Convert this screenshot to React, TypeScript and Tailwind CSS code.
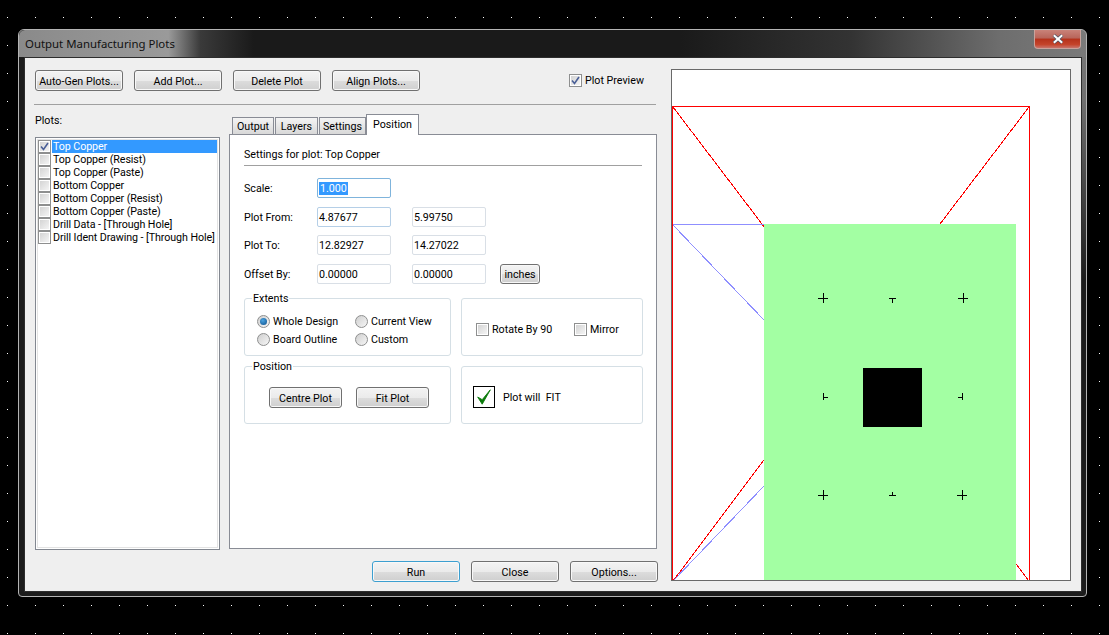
const plots = [
  "Top Copper",
  "Top Copper (Resist)",
  "Top Copper (Paste)",
  "Bottom Copper",
  "Bottom Copper (Resist)",
  "Bottom Copper (Paste)",
  "Drill Data - [Through Hole]",
  "Drill Ident Drawing - [Through Hole]",
];

const btn =
  "flex items-center justify-center whitespace-nowrap rounded-[3px] border bg-[linear-gradient(#f3f3f3,#ebebeb_50%,#dddddd_50%,#cfcfcf)] shadow-[inset_0_0_0_1px_#f8f8f8] pt-px text-black";

function Check({ checked }: { checked?: boolean }) {
  return (
    <span className="flex h-[13px] w-[13px] shrink-0 items-center justify-center border border-[#8e8f8f] bg-white p-px">
      <span className="relative block h-full w-full bg-[linear-gradient(135deg,#d4d4d4,#f4f4f4)]">
        {checked && (
          <svg viewBox="0 0 9 9" className="absolute inset-0 h-[9px] w-[9px]">
            <path d="M1 4.5 L3.5 7.5 L8 1" fill="none" stroke="#4a5f97" strokeWidth="1.6" />
          </svg>
        )}
      </span>
    </span>
  );
}

function Radio({ on, label }: { on?: boolean; label: string }) {
  return (
    <div className="flex items-center gap-[3px]">
      <span className="flex h-[13px] w-[13px] items-center justify-center rounded-full border border-[#8e8f8f] bg-[linear-gradient(135deg,#cfcfcf,#f6f6f6)]">
        {on && <span className="h-[7px] w-[7px] rounded-full bg-[radial-gradient(circle_at_40%_35%,#4aa3e0,#0b4f8c)]" />}
      </span>
      <span>{label}</span>
    </div>
  );
}

function Field({ value, selected, tint }: { value: string; selected?: boolean; tint?: string }) {
  return (
    <div className={`flex h-[20px] w-[74px] items-center rounded-[2px] border pl-px ${tint ?? "border-[#d9dfe6]"}`}>
      {selected ? <span className="bg-[#3399ff] px-px text-white">{value}</span> : <span>{value}</span>}
    </div>
  );
}

function Group({ title, children }: { title?: string; children: React.ReactNode }) {
  return (
    <div className="relative h-[58px] rounded-[3px] border border-[#d5dfe5]">
      {title && <span className="absolute -top-[7px] left-[7px] bg-white px-px leading-[13px]">{title}</span>}
      {children}
    </div>
  );
}

function Cross({ x, y }: { x: number; y: number }) {
  return <path d={`M${x - 5} ${y}H${x + 5}M${x} ${y - 5}V${y + 5}`} stroke="#000" fill="none" />;
}

function Preview() {
  return (
    <div className="h-[512px] w-[400px] shrink-0 border border-[#696969] bg-white">
      <svg viewBox="672 70 398 510" className="block h-[510px] w-[398px]" shapeRendering="crispEdges">
        <path d="M672.5 581V106.5H1029.5V581" fill="none" stroke="#ff0000" />
        <path d="M673 107L765 228M1029 107L940 224M673 581L764 460M1016 564L1029 581" fill="none" stroke="#ff0000" />
        <path d="M673 224.5H764M673 225L764 320M673 581L764 486" fill="none" stroke="#8f8fff" />
        <rect x="764" y="224" width="252" height="357" fill="#a3ffa3" />
        <rect x="863" y="368" width="59" height="59" fill="#000" />
        <Cross x={823} y={298} />
        <Cross x={963} y={298} />
        <Cross x={823} y={495} />
        <Cross x={962} y={495} />
        <path
          d="M888.5 298H895.5M892 297.5V302.5M823 392.5V399.5M822.5 397H827.5M962 392.5V399.5M957.5 397H962.5M888.5 495H895.5M892 491.5V495.5"
          stroke="#000"
          fill="none"
        />
      </svg>
    </div>
  );
}

function CloseGlyph() {
  return (
    <svg viewBox="0 0 14 12" className="h-[10px] w-[12px]">
      <path d="M2 1.5L12 10.5M12 1.5L2 10.5" stroke="#4a5568" strokeWidth="4" fill="none" />
      <path d="M2 1.5L12 10.5M12 1.5L2 10.5" stroke="#fff" strokeWidth="2.4" fill="none" />
    </svg>
  );
}

export default function App() {
  return (
    <div className="h-[635px] w-[1109px] overflow-hidden bg-black bg-[radial-gradient(circle_at_7.5px_17.5px,#fff_0.6px,transparent_0.8px)] bg-[length:28px_28px] pl-[18px] pt-[29px] font-['Roboto',sans-serif] text-[10.7px] leading-[13px] text-black">
      <div className="h-[568px] w-[1069px] rounded-t-[6px] rounded-b-[4px] border border-[#b4b4b4] bg-[radial-gradient(circle_at_100%_0%,#7a7a7a_0,#707070_70px,#1c1c1c_250px)] pb-[4px] pl-[5px] pr-[3px]">
        <div className="-ml-[5px] -mr-[3px] flex h-[27px] items-start justify-between rounded-t-[6px] bg-[linear-gradient(90deg,#8a8a8a,#9a9a9a_14%,#3a3a3a_17%,#1a1a1a_22%,#1a1a1a_62%,#333_78%,#6e6e6e_92%,#7a7a7a)] pl-[6px] pr-[5px]">
          <span className="pt-[7px] font-['Noto_Sans',sans-serif] text-[11.4px] text-[#111]">Output Manufacturing Plots</span>
          <div className="flex h-[19px] w-[47px] items-center justify-center rounded-b-[4px] border border-t-0 border-[#c9a39c] bg-[linear-gradient(#c98279,#b8655a_45%,#b5321c_50%,#c4432a_80%,#c9736a)]">
            <CloseGlyph />
          </div>
        </div>
        <div className="flex h-[535px] w-[1058px] border border-[#2d2d2d] bg-[#efefef] pl-[10px] pt-[11px]">
          <div className="w-[623px] shrink-0 pt-px">
            <div className="flex h-[21px] items-center gap-[11px]">
              <div className={`${btn} h-[21px] w-[88px] border-[#707070]`}>Auto-Gen Plots...</div>
              <div className={`${btn} h-[21px] w-[88px] border-[#707070]`}>Add Plot...</div>
              <div className={`${btn} h-[21px] w-[88px] border-[#707070]`}>Delete Plot</div>
              <div className={`${btn} h-[21px] w-[88px] border-[#707070]`}>Align Plots...</div>
              <div className="ml-[138px] flex items-center gap-[3px]">
                <Check checked />
                <span>Plot Preview</span>
              </div>
            </div>
            <div className="-ml-px mt-[13px] h-px w-[622px] bg-[#a0a0a0]" />
            <div className="flex">
              <div className="w-[185px] shrink-0 pt-[9px]">
                <div>Plots:</div>
                <div className="mt-[10px] h-[413px] overflow-hidden border border-[#828790] bg-white p-px">
                  <div className="h-full border border-[#e3e3e3]">
                    {plots.map((p, i) => (
                      <div key={p} className="flex h-[13px] items-center whitespace-nowrap">
                        <Check checked={i === 0} />
                        <span
                          className={`ml-px h-[13px] flex-1 pl-px tracking-[-0.08px] ${
                            i === 0 ? "bg-[#3399ff] text-white" : ""
                          }`}
                        >
                          {p}
                        </span>
                      </div>
                    ))}
                  </div>
                </div>
              </div>
              <div className="ml-[9px] w-[428px] shrink-0 pt-[9px]">
                <div className="relative z-10 -mb-px flex h-[21px] items-end pl-[3px]">
                  <div className="flex h-[18px] w-[42px] items-center justify-center border border-[#898c95] bg-[linear-gradient(#f4f4f4,#d8d8d8)]">Output</div>
                  <div className="ml-px flex h-[18px] w-[43px] items-center justify-center border border-[#898c95] bg-[linear-gradient(#f4f4f4,#d8d8d8)]">Layers</div>
                  <div className="ml-px flex h-[18px] w-[47px] items-center justify-center border border-[#898c95] bg-[linear-gradient(#f4f4f4,#d8d8d8)]">Settings</div>
                  <div className="flex h-[21px] w-[53px] items-start justify-center border border-b-0 border-[#898c95] bg-white pt-[3px]">Position</div>
                </div>
                <div className="h-[415px] border border-[#898c95] bg-white pl-[14px] pt-[13px]">
                  <div>Settings for plot: Top Copper</div>
                  <div className="mt-[4px] h-px w-[398px] bg-[#a0a0a0]" />
                  <div className="mt-[12px] flex h-[20px] items-center">
                    <span className="w-[73px]">Scale:</span>
                    <Field value="1.000" selected tint="border-[#7fb4dc]" />
                  </div>
                  <div className="mt-[9px] flex h-[20px] items-center">
                    <span className="w-[73px]">Plot From:</span>
                    <Field value="4.87677" tint="border-[#b5cfe7]" />
                    <div className="ml-[21px]">
                      <Field value="5.99750" />
                    </div>
                  </div>
                  <div className="mt-[8px] flex h-[20px] items-center">
                    <span className="w-[73px]">Plot To:</span>
                    <Field value="12.82927" />
                    <div className="ml-[21px]">
                      <Field value="14.27022" />
                    </div>
                  </div>
                  <div className="mt-[9px] flex h-[20px] items-center">
                    <span className="w-[73px]">Offset By:</span>
                    <Field value="0.00000" />
                    <div className="ml-[21px]">
                      <Field value="0.00000" />
                    </div>
                    <div className={`${btn} ml-[14px] h-[20px] w-[40px] border-[#707070]`}>inches</div>
                  </div>
                  <div className="mt-[14px] grid w-[399px] grid-cols-[207px_182px] gap-[10px]">
                    <Group title="Extents">
                      <div className="grid grid-cols-[98px_1fr] gap-y-[5px] pl-[12px] pt-[16px]">
                        <Radio on label="Whole Design" />
                        <Radio label="Current View" />
                        <Radio label="Board Outline" />
                        <Radio label="Custom" />
                      </div>
                    </Group>
                    <Group>
                      <div className="flex h-full items-center pl-[14px] pt-[4px]">
                        <div className="flex w-[98px] items-center gap-[3px]">
                          <Check />
                          <span>Rotate By 90</span>
                        </div>
                        <div className="flex items-center gap-[3px]">
                          <Check />
                          <span>Mirror</span>
                        </div>
                      </div>
                    </Group>
                    <Group title="Position">
                      <div className="flex gap-[14px] pl-[24px] pt-[20px]">
                        <div className={`${btn} h-[21px] w-[73px] border-[#707070]`}>Centre Plot</div>
                        <div className={`${btn} h-[21px] w-[73px] border-[#707070]`}>Fit Plot</div>
                      </div>
                    </Group>
                    <Group>
                      <div className="flex h-full items-center pl-[11px] pt-[4px]">
                        <span className="flex h-[22px] w-[22px] items-center justify-center border border-black bg-white">
                          <svg viewBox="0 0 20 20" className="h-[18px] w-[18px]">
                            <path d="M3 10 L8 18 L17 2 L8 13 Z" fill="#0a7a0a" stroke="#0a7a0a" strokeWidth="1" />
                          </svg>
                        </span>
                        <span className="ml-[8px] whitespace-pre pt-px">Plot will  FIT</span>
                      </div>
                    </Group>
                  </div>
                </div>
              </div>
            </div>
            <div className="mt-[11px] flex justify-end gap-[11px]">
              <div className={`${btn} h-[21px] w-[88px] border-[#3c9fd0]`}>Run</div>
              <div className={`${btn} h-[21px] w-[88px] border-[#707070]`}>Close</div>
              <div className={`${btn} h-[21px] w-[88px] border-[#707070]`}>Options...</div>
            </div>
          </div>
          <div className="ml-[13px]">
            <Preview />
          </div>
        </div>
      </div>
    </div>
  );
}
